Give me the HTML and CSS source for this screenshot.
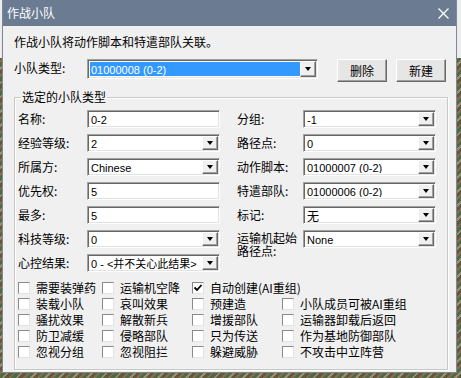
FILE: index.html
```html
<!DOCTYPE html>
<html lang="zh">
<head>
<meta charset="utf-8">
<title>作战小队</title>
<link rel="stylesheet" href="styles.css">
</head>
<body>
<div class="window">
  <div class="titlebar">
    <span class="title">作战小队</span>
    <svg class="close" width="11" height="11" viewBox="0 0 11 11"><path d="M0.5 0.5 L10.5 10.5 M10.5 0.5 L0.5 10.5" stroke="#fff" stroke-width="1.3" fill="none"/></svg>
  </div>
  <div class="desc">作战小队将动作脚本和特遣部队关联。</div>
  <div class="typerow">
    <span class="typelabel">小队类型:</span>
    <div class="field combo wide"><span class="val selected">01000008 (0-2)</span><span class="arrow"></span></div>
    <button class="btn first">删除</button>
    <button class="btn">新建</button>
  </div>
  <fieldset class="group">
    <legend>选定的小队类型</legend>
    <div class="inner">
      <div class="form">
        <span class="lbl">名称:</span><div class="field"><span class="val">0-2</span></div>
        <span class="lbl">分组:</span><div class="field combo"><span class="val">-1</span><span class="arrow"></span></div>

        <span class="lbl">经验等级:</span><div class="field combo"><span class="val">2</span><span class="arrow"></span></div>
        <span class="lbl">路径点:</span><div class="field combo"><span class="val">0</span><span class="arrow"></span></div>

        <span class="lbl">所属方:</span><div class="field combo"><span class="val">Chinese</span><span class="arrow"></span></div>
        <span class="lbl">动作脚本:</span><div class="field combo"><span class="val">01000007 (0-2)</span><span class="arrow"></span></div>

        <span class="lbl">优先权:</span><div class="field"><span class="val">5</span></div>
        <span class="lbl">特遣部队:</span><div class="field combo"><span class="val">01000006 (0-2)</span><span class="arrow"></span></div>

        <span class="lbl">最多:</span><div class="field"><span class="val">5</span></div>
        <span class="lbl">标记:</span><div class="field combo"><span class="val cjk">无</span><span class="arrow"></span></div>

        <span class="lbl">科技等级:</span><div class="field combo"><span class="val">0</span><span class="arrow"></span></div>
        <span class="lbl two">运输机起始<br>路径点:</span><div class="field combo"><span class="val">None</span><span class="arrow"></span></div>

        <span class="lbl">心控结果:</span><div class="field combo"><span class="val">0 - &lt;并不关心此结果&gt;</span><span class="arrow"></span></div>
      </div>
      <div class="checks">
        <label class="chk"><span class="box"></span>需要装弹药</label>
        <label class="chk"><span class="box"></span>运输机空降</label>
        <label class="chk"><span class="box"><svg width="10" height="10" viewBox="0 0 10 10"><path d="M1.5 4.5 L4 7 L8.5 2" stroke="#000" stroke-width="1.8" fill="none"/></svg></span>自动创建(AI重组)</label>
        <span class="chk"></span>

        <label class="chk"><span class="box"></span>装载小队</label>
        <label class="chk"><span class="box"></span>哀叫效果</label>
        <label class="chk"><span class="box"></span>预建造</label>
        <label class="chk"><span class="box"></span>小队成员可被AI重组</label>

        <label class="chk"><span class="box"></span>骚扰效果</label>
        <label class="chk"><span class="box"></span>解散新兵</label>
        <label class="chk"><span class="box"></span>增援部队</label>
        <label class="chk"><span class="box"></span>运输器卸载后返回</label>

        <label class="chk"><span class="box"></span>防卫减缓</label>
        <label class="chk"><span class="box"></span>侵略部队</label>
        <label class="chk"><span class="box"></span>只为传送</label>
        <label class="chk"><span class="box"></span>作为基地防御部队</label>

        <label class="chk"><span class="box"></span>忽视分组</label>
        <label class="chk"><span class="box"></span>忽视阻拦</label>
        <label class="chk"><span class="box"></span>躲避威胁</label>
        <label class="chk"><span class="box"></span>不攻击中立阵营</label>
      </div>
    </div>
  </fieldset>
</div>
</body>
</html>
```
FILE: styles.css
```css
* { box-sizing: border-box; }
html, body { margin: 0; padding: 0; }
body {
  width: 461px;
  height: 378px;
  overflow: hidden;
  font-family: "Noto Sans CJK SC", "Liberation Sans", sans-serif;
  font-size: 12px;
  color: #000;
  background:
    linear-gradient(180deg, #ececec 0, #ececec 58px, transparent 58px),
    repeating-linear-gradient(135deg, #5e5b3d 0 3px, #8a6b4e 3px 5px, #4d6a45 5px 8px, #a08c70 8px 10px);
}
.window {
  margin-left: 2px;
  width: 455px;
  height: 373px;
  background: #f0f0f0;
  border: 1px solid #7c8797;
  border-top: 0;
  display: flex;
  flex-direction: column;
}
.titlebar {
  height: 26px;
  flex: none;
  background: #6b7b92;
  color: #fff;
  display: flex;
  align-items: center;
  justify-content: space-between;
  padding: 0 7px 0 4px;
  line-height: 16px;
}
.close { display: block; }
.desc {
  margin-top: 8px;
  padding-left: 11px;
  line-height: 16px;
}
.typerow {
  margin-top: 9px;
  padding-left: 11px;
  display: flex;
  align-items: flex-start;
}
.typelabel {
  width: 73px;
  line-height: 18px;
  flex: none;
}
.field {
  height: 18px;
  background: #fff;
  border: 1px solid;
  border-color: #a0a0a0 #ffffff #ffffff #a0a0a0;
  box-shadow: inset 1px 1px 0 #696969, inset -1px -1px 0 #e3e3e3;
  display: flex;
  align-items: stretch;
  padding: 2px 2px 2px 3px;
  width: 133px;
  font-family: "Liberation Sans", "Noto Sans CJK SC", sans-serif;
  font-size: 11px;
  overflow: hidden;
}
.field .val {
  flex: 1;
  min-width: 0;
  white-space: nowrap;
  overflow: hidden;
  line-height: 14px;
}
.field .val.cjk {
  font-family: "Noto Sans CJK SC", sans-serif;
  font-size: 12px;
  line-height: 14px;
  overflow: visible;
}
.field.wide { width: 231px; height: 20px; }
.field.wide .val { line-height: 16px; }
.val.selected {
  background: #3399ff;
  color: #fff;
  padding-left: 1px;
  margin-left: -1px;
}
.arrow {
  flex: none;
  width: 16px;
  margin: -1px -1px -1px 0;
  background: #f0f0f0;
  border: 1px solid;
  border-color: #ffffff #696969 #696969 #ffffff;
  box-shadow: inset -1px -1px 0 #a0a0a0;
  position: relative;
}
.arrow::after {
  content: "";
  position: absolute;
  left: 4px;
  top: 50%;
  margin-top: -2px;
  border-left: 3.5px solid transparent;
  border-right: 3.5px solid transparent;
  border-top: 4px solid #000;
}
.btn {
  flex: none;
  width: 50px;
  height: 23px;
  margin-left: 9px;
  padding: 0;
  background: #e6e6e6;
  border: 1px solid;
  border-color: #ffffff #696969 #696969 #ffffff;
  box-shadow: inset -1px -1px 0 #a0a0a0;
  font-family: "Noto Sans CJK SC", sans-serif;
  font-size: 12px;
  color: #000;
}
.btn.first { margin-left: 19px; }
.group {
  margin: 7px 0 0 11px;
  padding: 0;
  width: 434px;
  height: 281px;
  border: 1px solid #c8c8c8;
  box-shadow: 1px 1px 0 #fff, inset 1px 1px 0 #fff;
  min-width: 0;
}
.group legend {
  margin-left: 6px;
  padding: 0 1px;
  line-height: 16px;
}
.inner {
  padding: 5px 0 0 3px;
}
.form {
  display: grid;
  grid-template-columns: 69px 150px 66px 133px;
  grid-auto-rows: 24px;
  align-items: start;
}
.lbl {
  line-height: 18px;
  white-space: nowrap;
}
.lbl.two {
  line-height: 13px;
  margin-top: 1px;
}
.checks {
  margin-top: 2px;
  display: grid;
  grid-template-columns: 84px 90px 90px auto;
  grid-auto-rows: 16px;
}
.chk {
  display: flex;
  align-items: center;
  white-space: nowrap;
  line-height: 16px;
}
.box {
  flex: none;
  width: 12px;
  height: 12px;
  margin-right: 6px;
  background: #fff;
  border: 1px solid;
  border-color: #8a8a8a #e3e3e3 #e3e3e3 #8a8a8a;
  display: flex;
  align-items: center;
  justify-content: center;
}
.box svg { display: block; }
```
